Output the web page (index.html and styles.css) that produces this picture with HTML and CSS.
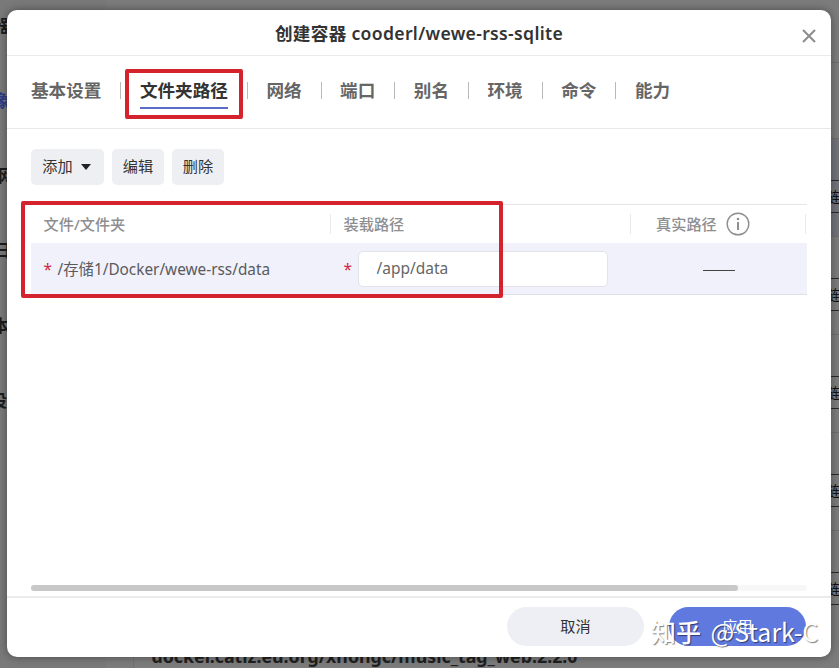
FILE: index.html
```html
<!DOCTYPE html>
<html lang="zh-CN">
<head>
    <meta charset="UTF-8">
    <meta name="viewport" content="width=device-width, initial-scale=1.0">
    <title>创建容器</title>
    <link rel="stylesheet" href="styles.css">
</head>
<body>

    <div class="page">
        <div class="side">
            <span>器</span>
            <span class="current">像</span>
            <span class="net">网</span>
            <span class="log">日</span>
            <span>本</span>
            <span class="set">设</span>
        </div>
        <div class="images">docker.catiz.eu.org/xhongc/music_tag_web:2.2.0</div>
        <div class="links">
            <div class="link-row"><span>链接</span></div>
            <div class="link-row"><span>链接</span></div>
            <div class="link-row"><span>链接</span></div>
            <div class="link-row"><span>链接</span></div>
            <div class="link-row"><span>链接</span></div>
        </div>
    </div>

    <div class="modal">
        <div class="header">
            <h2>创建容器 cooderl/wewe-rss-sqlite</h2>
            <svg class="close" width="14" height="14" viewBox="0 0 14 14">
                <path d="M1 1L13 13M13 1L1 13" stroke="#8c8c8c" stroke-width="2" fill="none"/>
            </svg>
        </div>

        <div class="tabs">
            <span class="tab">基本设置</span>
            <span class="tab active">文件夹路径</span>
            <span class="tab">网络</span>
            <span class="tab">端口</span>
            <span class="tab">别名</span>
            <span class="tab">环境</span>
            <span class="tab">命令</span>
            <span class="tab">能力</span>
        </div>

        <div class="content">
            <div class="toolbar">
                <button class="add">添加 <i class="caret"></i></button>
                <button>编辑</button>
                <button>删除</button>
            </div>

            <div class="table">
                <div class="row head">
                    <div class="cell">文件/文件夹</div>
                    <div class="cell">装载路径</div>
                    <div class="cell real">真实路径
                        <svg width="24" height="24" viewBox="0 0 24 24">
                            <circle cx="12" cy="12" r="10.8" stroke="#8e8e91" stroke-width="1.4" fill="none"/>
                            <circle cx="12" cy="7" r="1.3" fill="#8e8e91"/>
                            <path d="M12 10V18" stroke="#8e8e91" stroke-width="2"/>
                        </svg>
                    </div>
                </div>
                <div class="row data">
                    <div class="cell"><b class="star">*</b><span class="folder">/存储1/Docker/wewe-rss/data</span></div>
                    <div class="cell"><b class="star">*</b><input type="text" value="/app/data"></div>
                    <div class="cell dash"><i></i></div>
                </div>
            </div>

            <div class="scrollbar"><div class="thumb"></div></div>
        </div>

        <div class="footer">
            <button>取消</button>
            <button class="apply">应用</button>
        </div>
    </div>

    <div class="mark mark-tab"></div>
    <div class="mark mark-table"></div>
    <div class="watermark"><span class="zh">知乎</span> @Stark-C</div>

</body>
</html>
```
FILE: styles.css
```css
* {
    box-sizing: border-box;
}
body {
    margin: 0;
    width: 839px;
    height: 668px;
    overflow: hidden;
    background: #7c7c7c;
    font-family: "Noto Sans", "Noto Sans CJK SC", sans-serif;
    color: #333;
}
button, input {
    font-family: inherit;
    border: none;
}

/* page behind the dialog */
.page {
    display: flex;
    justify-content: space-between;
    height: 668px;
}
.side {
    display: flex;
    flex-direction: column;
    width: 106px;
    padding-top: 8px;
    background: #797979;
    font-size: 17px;
    font-weight: bold;
    color: #1c1c1c;
}
.side span {
    height: 75px;
    line-height: 36px;
    margin-left: -8px;
}
.side .current {
    color: #2f3c85;
}
.side .net {
    margin-left: -2px;
}
.side .log {
    margin-left: -6px;
}
.side .set {
    margin-left: -10px;
}
.images {
    align-self: flex-end;
    width: 640px;
    padding-left: 18px;
    border-left: 1px solid #707070;
    font-size: 17.8px;
    line-height: 24px;
    font-weight: bold;
    color: #202020;
    white-space: nowrap;
}
.links {
    width: 40px;
    padding-top: 138px;
    background: linear-gradient(#6d6d6d, #6d6d6d) 0 62px / 100% 1px no-repeat;
}
.link-row {
    height: 98px;
    padding-top: 41px;
    border-top: 1px solid #6d6d6d;
}
.link-row:first-child {
    background: #72737a;
}
.link-row span {
    display: block;
    height: 33px;
    padding-left: 26px;
    border-top: 1px solid #292929;
    border-bottom: 1px solid #292929;
    font-size: 15px;
    line-height: 32px;
    color: #111;
    white-space: nowrap;
    overflow: hidden;
}

/* dialog */
.modal {
    position: absolute;
    left: 7px;
    top: 10px;
    width: 824px;
    height: 647px;
    display: flex;
    flex-direction: column;
    background: #fff;
    border-radius: 10px;
    box-shadow: 0 0 8px rgba(0, 0, 0, 0.4);
}
.header {
    display: flex;
    align-items: center;
    height: 46px;
    padding-right: 15px;
    border-bottom: 1px solid #ebebeb;
}
.header h2 {
    flex: 1;
    margin: 0 0 0 29px;
    font-size: 17.6px;
    letter-spacing: 0.32px;
    line-height: 24px;
    font-weight: 600;
    text-align: center;
    color: #333;
}
.close {
    margin-top: 7px;
}
.tabs {
    display: flex;
    height: 73px;
    padding: 21px 0 0 24px;
    border-bottom: 1px solid #e8e8e8;
    font-size: 17.6px;
    font-weight: bold;
    line-height: 26px;
    color: #666;
}
.tab {
    display: flex;
    align-items: center;
    height: 26px;
    white-space: nowrap;
}
.tab:not(:last-child)::after {
    content: "";
    width: 1px;
    height: 17px;
    margin: 0 18.5px 0 19px;
    background: #b9b9bd;
}
.tab.active {
    color: #333;
    background: linear-gradient(#5a6cc8, #5a6cc8) 0 100% / 88px 2px no-repeat;
    height: 32px;
    padding-bottom: 6px;
}
.content {
    flex: 1;
    display: flex;
    flex-direction: column;
    padding: 20px 24px 5px;
}
.toolbar {
    display: flex;
    gap: 8px;
    margin-bottom: 19px;
}
.toolbar button {
    width: 52px;
    height: 36px;
    padding: 0 0 5px;
    border-radius: 5px;
    background: #eeeff3;
    font-size: 15.2px;
    color: #333;
}
.toolbar .add {
    display: flex;
    align-items: center;
    justify-content: center;
    gap: 8px;
    width: 73px;
    padding-right: 2px;
}
.caret {
    margin-top: 5px;
    border: 5px solid transparent;
    border-top: 6px solid #222;
    border-bottom: 0;
}
.row {
    display: grid;
    grid-template-columns: 300px 300px 175px;
}
.cell {
    display: flex;
    align-items: center;
    padding-left: 12.5px;
}
.head {
    height: 39px;
    padding: 9px 0;
    border-top: 1px solid #e6e6e8;
    font-size: 15.2px;
    line-height: 16px;
    font-weight: 500;
    color: #8e8e91;
}
.head .cell {
    height: 20px;
    padding-bottom: 1px;
    border-right: 1px solid #e9e9eb;
}
.head .real {
    padding-left: 25px;
    gap: 9px;
}
.head svg {
    flex: none;
    margin-top: 1px;
}
.data {
    height: 52px;
    border-bottom: 1px solid #dfdfe5;
    background: #f0f1fa;
    font-size: 15.35px;
    color: #5a5a5e;
}
.folder {
    padding-bottom: 2px;
}
.star {
    width: 14px;
    font-weight: normal;
    color: #d21f45;
}
.data input {
    width: 250px;
    height: 36px;
    padding: 0 18px 2px;
    border: 1px solid #e2e3e8;
    border-radius: 5px;
    background: #fff;
    font-size: 15.5px;
    color: #666;
}
.dash {
    justify-content: center;
    padding-left: 0;
}
.dash i {
    width: 32px;
    height: 1px;
    margin-top: 3px;
    background: #444;
}
.scrollbar {
    height: 6px;
    margin-top: auto;
    border-radius: 3px;
    background: #f7f7f7;
}
.thumb {
    width: 707px;
    height: 6px;
    border-radius: 3px;
    background: #c8c8c8;
}
.footer {
    display: flex;
    justify-content: flex-end;
    gap: 25px;
    height: 61px;
    padding: 9px 25px 0 0;
    border-top: 2px solid #ebebeb;
}
.footer button {
    width: 137px;
    height: 39px;
    padding-bottom: 5px;
    border-radius: 20px;
    background: #eeeff4;
    font-size: 15.2px;
    color: #333;
}
.footer .apply {
    background: #5f79de;
    color: #fff;
}

/* red frames and watermark on top of everything */
.mark {
    position: absolute;
    border: 4px solid #d5232e;
    border-radius: 2px;
}
.mark-tab {
    left: 125px;
    top: 69px;
    width: 118px;
    height: 50px;
}
.mark-table {
    left: 21px;
    top: 201px;
    width: 482px;
    height: 97px;
}
.watermark {
    position: absolute;
    left: 651px;
    top: 614px;
    font-family: "Noto Sans CJK SC", sans-serif;
    font-size: 25px;
    line-height: 34px;
    color: #fff;
    text-shadow: 1px 1px 1px rgba(0, 0, 0, 0.5);
    white-space: nowrap;
}
.watermark .zh {
    margin-right: 4px;
    font-weight: 500;
}
```
